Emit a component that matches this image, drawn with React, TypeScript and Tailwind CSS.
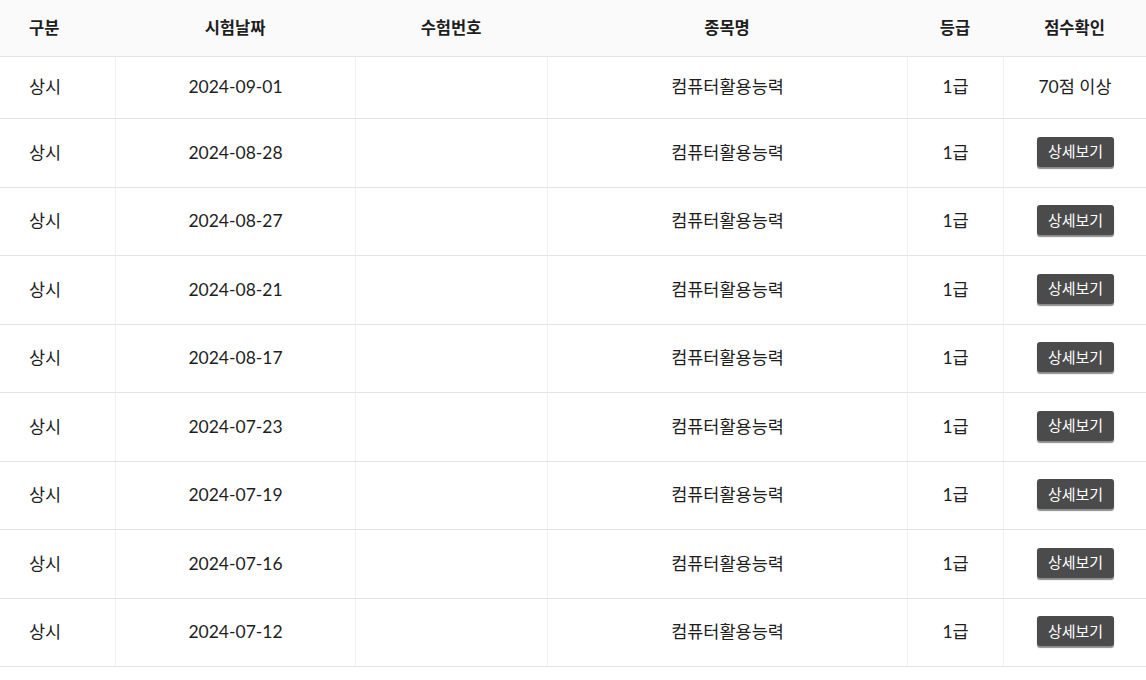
import React from "react";

const rows = [
  "2024-09-01",
  "2024-08-28",
  "2024-08-27",
  "2024-08-21",
  "2024-08-17",
  "2024-07-23",
  "2024-07-19",
  "2024-07-16",
  "2024-07-12",
];

const font = { fontFamily: "Lato, 'Noto Sans CJK KR', sans-serif" };

export default function App() {
  const cols = "grid grid-cols-[115px_240px_192px_360px_96px_143px]";
  return (
    <div className="w-[1146px] h-[680px] bg-white text-[#1e1e1e]" style={font}>
      <div className={`${cols} h-[57px] bg-[#fafafa] border-b border-[#e3e3e3] items-center text-[16.5px] font-bold`}>
        <div className="pl-[29px]">구분</div>
        <div className="text-center">시험날짜</div>
        <div className="text-center">수험번호</div>
        <div className="text-center">종목명</div>
        <div className="text-center">등급</div>
        <div className="text-center">점수확인</div>
      </div>
      {rows.map((d, i) => (
        <div
          key={d}
          className={`${cols} ${i === 0 ? "h-[62px]" : "h-[68.5px]"} border-b border-[#e3e3e3] text-[17.5px]`}
        >
          <div className="flex items-center pl-[29px]">상시</div>
          <div className="flex items-center justify-center border-l border-[#f0f0f0]">{d}</div>
          <div className="border-l border-[#f0f0f0]"></div>
          <div className="flex items-center justify-center border-l border-[#f0f0f0]">컴퓨터활용능력</div>
          <div className="flex items-center justify-center border-l border-[#f0f0f0]">1급</div>
          <div className="flex items-center justify-center border-l border-[#f0f0f0]">
            {i === 0 ? (
              <span>70점 이상</span>
            ) : (
              <button className="h-[30px] px-[11px] rounded-[3px] bg-[#4b4b4b] text-white text-[15px] leading-none shadow-[0_2px_1px_rgba(0,0,0,0.45)] -mt-[2px] ml-px">
                상세보기
              </button>
            )}
          </div>
        </div>
      ))}
    </div>
  );
}
